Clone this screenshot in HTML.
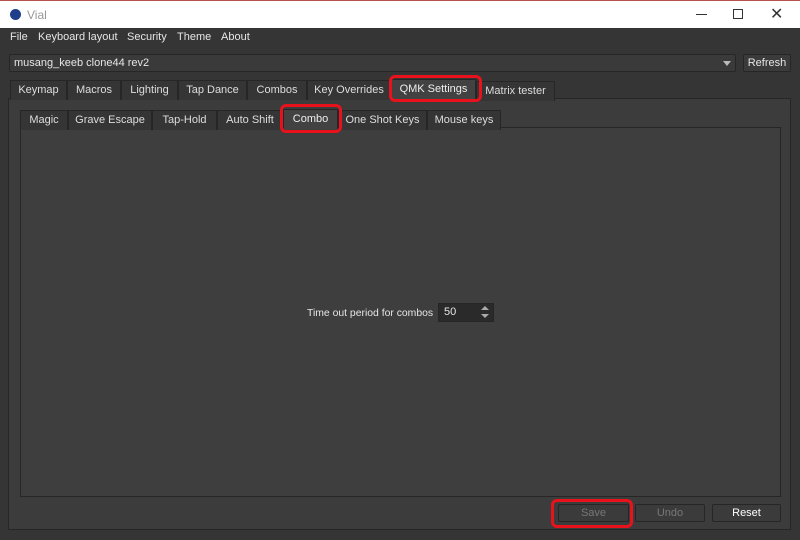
<!DOCTYPE html>
<html><head><style>
*{box-sizing:border-box;margin:0;padding:0}
body{width:800px;height:540px;background:#353535;font-family:"Liberation Sans",Arial,sans-serif;font-size:11px;color:#e6e6e6;position:relative;overflow:hidden}
.abs{position:absolute}
.title{left:0;top:0;width:800px;height:28px;background:#fff;border-top:1px solid #b85050}
.tab{position:absolute;height:20px;border:1px solid #262626;border-bottom:none;background:#353535;text-align:center;line-height:19px;color:#ddd}
.sel{background:#424242;color:#eee}
.red{position:absolute;border:3px solid #e8121c;border-radius:6px}
.btn{position:absolute;height:18px;border:1px solid #262626;border-radius:2px;background:#3b3b3b;text-align:center;line-height:16px}
</style></head><body>
<div class="abs title">
 <div class="abs" style="left:10px;top:8px;width:11px;height:11px;border-radius:50%;background:#1f3f8a"></div>
 <div class="abs" style="left:27px;top:7px;color:#999;font-size:12px">Vial</div>
 <div class="abs" style="left:696px;top:13px;width:11px;height:1px;background:#333"></div>
 <div class="abs" style="left:733px;top:8px;width:10px;height:10px;border:1px solid #333"></div>
 <div class="abs" style="left:770px;top:3px;font-size:16px;color:#333">✕</div>
</div>
<div class="abs" style="left:10px;top:30px;line-height:14px">File</div>
<div class="abs" style="left:38px;top:30px;line-height:14px">Keyboard layout</div>
<div class="abs" style="left:127px;top:30px;line-height:14px">Security</div>
<div class="abs" style="left:177px;top:30px;line-height:14px">Theme</div>
<div class="abs" style="left:221px;top:30px;line-height:14px">About</div>
<div class="abs" style="left:9px;top:54px;width:727px;height:18px;border:1px solid #262626;border-radius:2px;background:#3a3a3a;line-height:16px;padding-left:4px">musang_keeb clone44 rev2</div>
<div class="abs" style="left:723px;top:61px;border-left:4px solid transparent;border-right:4px solid transparent;border-top:5px solid #bbb"></div>
<div class="btn" style="left:743px;top:54px;width:48px">Refresh</div>

<div class="abs" style="left:8px;top:98px;width:783px;height:432px;border:1px solid #262626;background:#3c3c3c"></div>
<div class="tab" style="left:10px;top:80px;width:57px">Keymap</div>
<div class="tab" style="left:67px;top:80px;width:54px">Macros</div>
<div class="tab" style="left:121px;top:80px;width:57px">Lighting</div>
<div class="tab" style="left:178px;top:80px;width:69px">Tap Dance</div>
<div class="tab" style="left:247px;top:80px;width:60px">Combos</div>
<div class="tab" style="left:307px;top:80px;width:84px">Key Overrides</div>
<div class="tab sel" style="left:391px;top:79px;width:85px;height:21px;border-bottom:none">QMK Settings</div>
<div class="tab" style="left:476px;top:81px;width:79px">Matrix tester</div>

<div class="abs" style="left:20px;top:127px;width:761px;height:370px;border:1px solid #262626;background:#3e3e3e"></div>
<div class="tab" style="left:20px;top:110px;width:48px">Magic</div>
<div class="tab" style="left:68px;top:110px;width:84px">Grave Escape</div>
<div class="tab" style="left:152px;top:110px;width:65px">Tap-Hold</div>
<div class="tab" style="left:217px;top:110px;width:66px">Auto Shift</div>
<div class="tab sel" style="left:283px;top:109px;width:55px;height:20px">Combo</div>
<div class="tab" style="left:338px;top:110px;width:89px">One Shot Keys</div>
<div class="tab" style="left:427px;top:110px;width:74px">Mouse keys</div>

<div class="abs" style="left:307px;top:307px;line-height:13px;font-size:10.4px">Time out period for combos</div>
<div class="abs" style="left:438px;top:303px;width:56px;height:19px;border:1px solid #262626;background:#2a2a2a;line-height:17px;padding-left:5px">50</div>
<div class="abs" style="left:481px;top:306px;border-left:4px solid transparent;border-right:4px solid transparent;border-bottom:4px solid #aaa"></div>
<div class="abs" style="left:481px;top:314px;border-left:4px solid transparent;border-right:4px solid transparent;border-top:4px solid #aaa"></div>

<div class="btn" style="left:558px;top:504px;width:71px;color:#777">Save</div>
<div class="btn" style="left:635px;top:504px;width:70px;color:#777">Undo</div>
<div class="btn" style="left:712px;top:504px;width:69px;color:#fff">Reset</div>

<div class="red" style="left:389px;top:75px;width:93px;height:27px"></div>
<div class="red" style="left:280px;top:104px;width:62px;height:29px"></div>
<div class="red" style="left:551px;top:499px;width:82px;height:29px"></div>
</body></html>
